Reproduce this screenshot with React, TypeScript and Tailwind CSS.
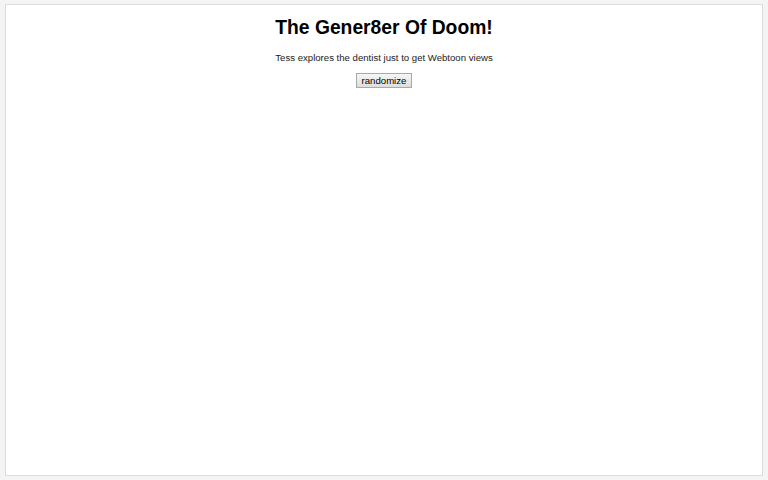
import React, { useState } from "react";

const lines = [
  "Tess explores the dentist just to get Webtoon views",
  "Tess bakes a cake just to get Webtoon views",
  "Tess fights the mayor just to get Webtoon views",
];

const App = () => {
  const [idx, setIdx] = useState(0);

  return (
    <div className="h-[480px] w-full bg-[#f4f4f4] p-[4px] pl-[5px] pr-[5px] font-['Liberation_Sans',Arial,sans-serif]">
      <div className="flex h-full flex-col items-center border border-[#dcdcdc] bg-white pt-[11px]">
        <h1 className="text-[19.3px] font-bold leading-[24px] text-black">The Gener8er Of Doom!</h1>
        <p className="mt-[12px] text-[9.6px] leading-[12px] text-[#222]">{lines[idx]}</p>
        <button
          onClick={() => setIdx((idx + 1) % lines.length)}
          className="mt-[9px] h-[15px] w-[56px] border border-[#a9a9a9] bg-gradient-to-b from-[#f6f6f6] to-[#dedede] text-[9.6px] leading-[12px] text-black"
        >
          randomize
        </button>
      </div>
    </div>
  );
};

export default App;
